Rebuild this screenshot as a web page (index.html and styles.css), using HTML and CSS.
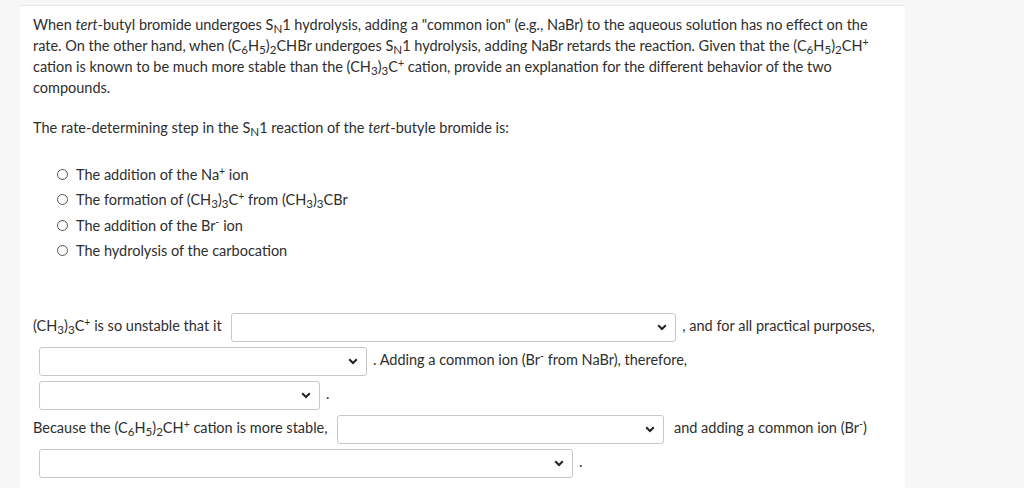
FILE: index.html
```html
<!DOCTYPE html>
<html lang="en">
<head>
<meta charset="utf-8">
<title>SN1 question</title>
<link rel="stylesheet" href="styles.css">
</head>
<body>
<div class="panel">
  <p class="intro">When <i>tert</i>-butyl bromide undergoes S<sub>N</sub>1 hydrolysis, adding a "common ion" (e.g., NaBr) to the aqueous solution has no effect on the rate. On the other hand, when (C<sub>6</sub>H<sub>5</sub>)<sub>2</sub>CHBr undergoes S<sub>N</sub>1 hydrolysis, adding NaBr retards the reaction. Given that the (C<sub>6</sub>H<sub>5</sub>)<sub>2</sub>CH<sup>+</sup> cation is known to be much more stable than the (CH<sub>3</sub>)<sub>3</sub>C<sup>+</sup> cation, provide an explanation for the different behavior of the two compounds.</p>
  <p class="question">The rate-determining step in the S<sub>N</sub>1 reaction of the <i>tert</i>-butyle bromide is:</p>
  <ul class="options">
    <li><input type="radio" name="rds" class="radio"><span>The addition of the Na<sup>+</sup> ion</span></li>
    <li><input type="radio" name="rds" class="radio"><span>The formation of (CH<sub>3</sub>)<sub>3</sub>C<sup>+</sup> from (CH<sub>3</sub>)<sub>3</sub>CBr</span></li>
    <li><input type="radio" name="rds" class="radio"><span>The addition of the Br<sup>-</sup> ion</span></li>
    <li><input type="radio" name="rds" class="radio"><span>The hydrolysis of the carbocation</span></li>
  </ul>
  <p class="blanks first">(CH<sub>3</sub>)<sub>3</sub>C<sup>+</sup> is so unstable that it <select class="dd w1"><option></option></select>, and for all practical purposes, <select class="dd w2"><option></option></select>. Adding a common ion (Br<sup>-</sup> from NaBr), therefore, <select class="dd w3"><option></option></select>.</p>
  <p class="blanks">Because the (C<sub>6</sub>H<sub>5</sub>)<sub>2</sub>CH<sup>+</sup> cation is more stable, <select class="dd w4"><option></option></select> and adding a common ion (Br<sup>-</sup>) <select class="dd w5"><option></option></select>.</p>
</div>
</body>
</html>
```
FILE: styles.css
```css
html, body {
  margin: 0;
  padding: 0;
  background: #f7f7f7;
  height: 100%;
}
body {
  font-family: Lato, "Liberation Sans", sans-serif;
  font-size: 14.5px;
  color: #2e2e2e;
}
.panel {
  margin-left: 20px;
  margin-top: 5px;
  width: 885px;
  box-sizing: border-box;
  background: #fff;
  border-top: 1px solid #e6e6e6;
  padding: 8px 13px 20px;
  min-height: 483px;
}
p { margin: 0; }
sub, sup { line-height: 0; }
sub {
  font-size: 80%;
  vertical-align: -0.25em;
}
sup {
  font-size: 72%;
  vertical-align: 0.5em;
}
.intro { line-height: 21px; }
.question {
  line-height: 21px;
  margin-top: 19px;
}
.options {
  list-style: none;
  margin: 24px 0 0;
  padding: 0 0 0 24px;
}
.options li {
  display: flex;
  align-items: center;
  gap: 8px;
  height: 25.3px;
}
.radio {
  appearance: none;
  -webkit-appearance: none;
  margin: 0;
  width: 11px;
  height: 11px;
  border: 1px solid #555;
  border-radius: 50%;
  background: #fff;
  flex: none;
}
.blanks {
  line-height: 34px;
}
.blanks.first { margin-top: 46px; }
.dd {
  appearance: none;
  -webkit-appearance: none;
  height: 29px;
  margin: 0 6px;
  vertical-align: middle;
  border: 1px solid #c8c8c8;
  border-radius: 3px;
  background: #fff url("data:image/svg+xml;utf8,<svg xmlns='http://www.w3.org/2000/svg' width='10' height='7' viewBox='0 0 10 7'><path d='M1.2 1.3 L5 5 L8.8 1.3' fill='none' stroke='%23222' stroke-width='2'/></svg>") no-repeat right 8px center;
  font: inherit;
  box-sizing: border-box;
}
.w1 { width: 445px; }
.w2 { width: 328px; }
.w3 { width: 281px; }
.w4 { width: 327px; }
.w5 { width: 534px; }
```
